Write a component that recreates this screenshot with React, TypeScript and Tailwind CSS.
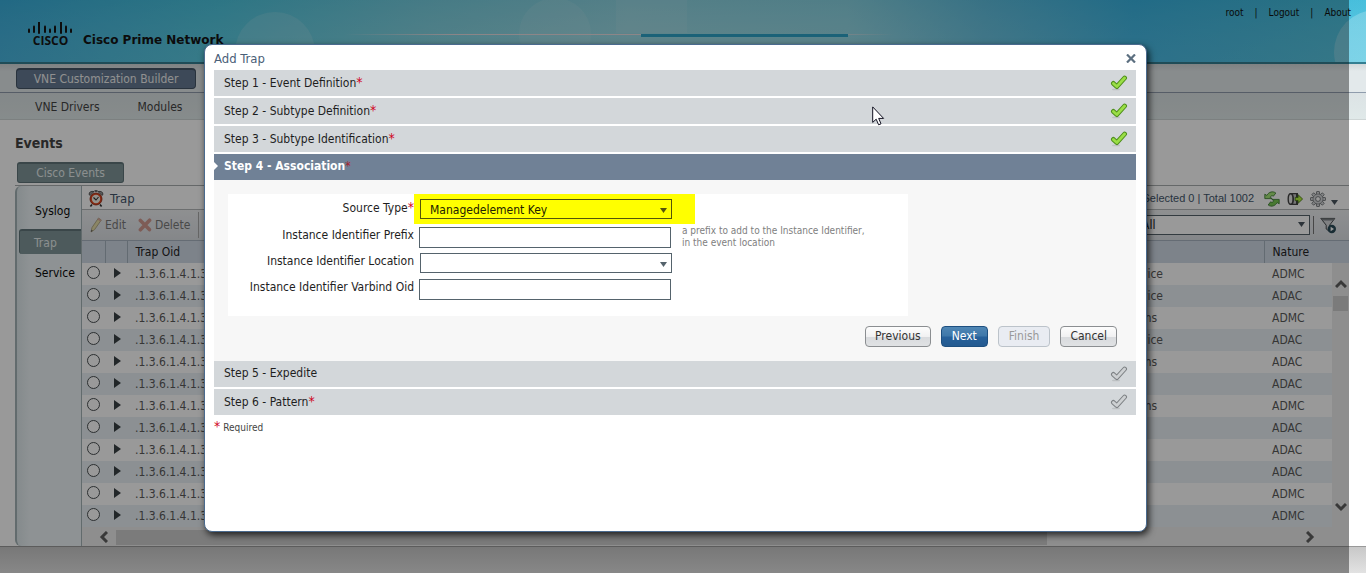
import React from "react";

const SERVICE = "vice";
const ALARMS = "ms";

const rows: { detail: string; nature: string }[] = [
  { detail: SERVICE, nature: "ADMC" },
  { detail: SERVICE, nature: "ADAC" },
  { detail: ALARMS, nature: "ADMC" },
  { detail: SERVICE, nature: "ADAC" },
  { detail: ALARMS, nature: "ADAC" },
  { detail: "", nature: "ADAC" },
  { detail: ALARMS, nature: "ADMC" },
  { detail: "", nature: "ADAC" },
  { detail: "", nature: "ADAC" },
  { detail: "", nature: "ADAC" },
  { detail: "", nature: "ADMC" },
  { detail: "", nature: "ADMC" },
];

const logoBars: [number, number, number][] = [
  [0, 7, 10], [5, 4, 10], [10, 0, 11], [16, 4, 10], [21, 7, 10],
  [26, 4, 10], [32, 0, 11], [37, 4, 10], [42, 7, 10],
];

function Logo() {
  return (
    <div className="flex w-[45px] flex-col items-center text-[#171717]">
      <svg width="45" height="12" viewBox="0 0 45 12" aria-hidden="true">
        {logoBars.map(([x, top, bottom]) => (
          <line key={x} x1={x + 1} x2={x + 1} y1={top + 0.5} y2={bottom} stroke="#171717" strokeWidth="2" strokeLinecap="round" />
        ))}
      </svg>
      <span className="font-['Open_Sans',sans-serif] text-[12px] leading-[14px] font-bold">CISCO</span>
    </div>
  );
}

function CheckIcon({ done }: { done: boolean }) {
  const edge = done ? "#4f8f1c" : "#7d8184";
  const fill = done ? "#9ade46" : "#cdd0d2";
  return (
    <svg width="18" height="16" viewBox="0 0 18 16" aria-hidden="true">
      <ellipse cx="6" cy="14.4" rx="4" ry=".9" fill="#000" opacity="0.1" />
      <path d="M3.4 8.4L6.8 11.6L14.6 3" fill="none" stroke={edge} strokeWidth="4.8" strokeLinecap="round" strokeLinejoin="round" />
      <path d="M3.4 8.4L6.8 11.6L14.6 3" fill="none" stroke={fill} strokeWidth="2.8" strokeLinecap="round" strokeLinejoin="round" />
    </svg>
  );
}

function Star() {
  return <span className="text-[14px] text-[#d0021b]">*</span>;
}

function StepBar({ title, required, done }: { title: string; required?: boolean; done: boolean }) {
  return (
    <button type="button" className="flex h-[26px] w-full items-center justify-between bg-[#d3d7da] pr-2 pl-[10px] text-left text-[#1e1e1e]">
      <span className="pb-0.5">
        {title}
        {required && <Star />}
      </span>
      <CheckIcon done={done} />
    </button>
  );
}

function Caret({ color }: { color: string }) {
  return (
    <svg width="7" height="5" viewBox="0 0 7 5" aria-hidden="true">
      <path d="M0 0H7L3.5 5Z" fill={color} />
    </svg>
  );
}

function SelectBox({ id, value, caret, border }: { id: string; value: string; caret: string; border: string }) {
  return (
    <div className="relative ml-px w-[252px]">
      <select id={id} defaultValue={value} className={"block h-5 w-full appearance-none border bg-transparent pt-0.5 pl-[9px] text-[12px] leading-4 text-[#222200] " + border}>
        <option value={value}>{value}</option>
      </select>
      <span className="pointer-events-none absolute top-[9px] right-[5px]">
        <Caret color={caret} />
      </span>
    </div>
  );
}

function AlarmIcon() {
  return (
    <svg width="16" height="17" viewBox="0 0 16 17" aria-hidden="true">
      <path d="M4 14.5L2.4 16.5M12 14.5L13.6 16.5" stroke="#333" strokeWidth="1.6" />
      <path d="M1 4.6C1 2 3 .8 6 1.6L2.2 5.4ZM15 4.6C15 2 13 .8 10 1.6L13.8 5.4Z" fill="#999" stroke="#333" strokeWidth=".7" />
      <path d="M6.5 1h3" stroke="#333" strokeWidth="1.4" />
      <circle cx="8" cy="9" r="6" fill="#e0441c" stroke="#8d260c" strokeWidth=".8" />
      <circle cx="8" cy="9" r="4.2" fill="#f7f3e8" />
      <path d="M5.5 7.5L8 10L10.5 7" fill="none" stroke="#333" strokeWidth="1.1" />
    </svg>
  );
}

function PencilIcon() {
  return (
    <svg width="12" height="16" viewBox="0 0 12 16" aria-hidden="true">
      <path d="M1 15L2 10.5L8.5 1L11.3 3L4.6 12.6Z" fill="#e8dfa8" stroke="#a59b77" strokeWidth=".8" />
      <path d="M8.5 1L11.3 3L10.3 4.5L7.5 2.5Z" fill="#dba9a0" />
      <path d="M1 15L1.5 12.8L2.8 13.8Z" fill="#555" />
    </svg>
  );
}

function DeleteIcon() {
  return (
    <svg width="14" height="14" viewBox="0 0 14 14" aria-hidden="true">
      <path d="M2.4 2.4L11.4 11.6M11.6 2.2L2.4 11.8" stroke="#d29a90" strokeWidth="3.6" strokeLinecap="round" />
    </svg>
  );
}

function RefreshIcon() {
  return (
    <svg width="16" height="16" viewBox="0 0 16 16" aria-hidden="true">
      <path d="M.8 7.6V3.2L2.8 4.4C5 .8 8.8 -.2 11.8 2L9.4 5.2C8 4.2 6.8 4.8 6.2 6.4L8.2 7.6Z" fill="#a5e678" stroke="#35752a" strokeWidth=".8" strokeLinejoin="round" />
      <path d="M15.2 8.4V12.8L13.2 11.6C11 15.2 7.2 16.2 4.2 14L6.6 10.8C8 11.8 9.2 11.2 9.8 9.6L7.8 8.4Z" fill="#78ca54" stroke="#35752a" strokeWidth=".8" strokeLinejoin="round" />
    </svg>
  );
}

function ExportIcon() {
  return (
    <svg width="16" height="14" viewBox="0 0 16 14" aria-hidden="true">
      <path d="M3.5 1H11V13H3.5C1.6 13 .5 10.5 .5 7S1.6 1 3.5 1Z" fill="#444" />
      <ellipse cx="3.6" cy="7" rx="1.7" ry="4.6" fill="#e8e8e8" />
      <path d="M6 2.2H9V11.8H6.2C7.4 9 7.4 5 6 2.2Z" fill="#c4c4c4" />
      <path d="M8.2 5.4H11.2V2.8L15.6 7L11.2 11.2V8.6H8.2Z" fill="#b4f03c" stroke="#3e6f12" strokeWidth=".8" />
    </svg>
  );
}

function GearIcon() {
  return (
    <svg width="16" height="16" viewBox="0 0 16 16" aria-hidden="true">
      {[0, 45, 90, 135, 180, 225, 270, 315].map((angle) => (
        <rect key={angle} x="6.5" y=".5" width="3" height="4" rx=".5" fill="#d6d8da" stroke="#6c7074" strokeWidth=".8" transform={`rotate(${angle} 8 8)`} />
      ))}
      <circle cx="8" cy="8" r="5" fill="#d6d8da" stroke="#6c7074" strokeWidth=".6" />
      <circle cx="8" cy="8" r="2.4" fill="#fff" stroke="#6c7074" strokeWidth=".9" />
    </svg>
  );
}

function FunnelIcon() {
  return (
    <svg width="17" height="17" viewBox="0 0 17 17" aria-hidden="true">
      <path d="M.8 1.4H14.8L9.6 8.2V14.6L6.2 12V8.2Z" fill="#d5d8da" stroke="#44484b" strokeWidth="1" />
      <path d="M.8 1.4H14.8L13.6 3.4H2.2Z" fill="#7a7f83" />
      <circle cx="11.8" cy="12" r="4.2" fill="#2b4b58" />
      <path d="M10.6 9.8V14.2L14 12Z" fill="#fff" />
    </svg>
  );
}

function Chevron({ d, width, height }: { d: string; width: number; height: number }) {
  return (
    <svg width={width} height={height} viewBox={`0 0 ${width} ${height}`} aria-hidden="true">
      <path d={d} fill="none" stroke="#606060" strokeWidth="3" />
    </svg>
  );
}

function Banner() {
  return (
    <header className="relative flex h-[64px] items-start justify-between overflow-hidden border-b-2 border-[#347f92] bg-[linear-gradient(90deg,#3eb2df_0%,#53cae1_16%,#80d4e2_31%,#9bdce6_46%,#94dae6_62%,#67c3e1_72%,#3eb7e4_83%,#4fc4df_100%)]">
      <svg className="absolute inset-0" width="100%" height="62" aria-hidden="true">
        <defs>
          <linearGradient id="shade" x1="0" y1="0" x2="0" y2="1">
            <stop offset="0" stopColor="#0b8fbe" stopOpacity=".1" />
            <stop offset="1" stopColor="#fff" stopOpacity=".06" />
          </linearGradient>
          <linearGradient id="line" x1="0" y1="0" x2="1" y2="0">
            <stop offset="0" stopColor="#f2dfe2" stopOpacity="0" />
            <stop offset=".2" stopColor="#f2dfe2" stopOpacity=".9" />
            <stop offset=".85" stopColor="#f2dfe2" stopOpacity=".9" />
            <stop offset="1" stopColor="#f2dfe2" stopOpacity="0" />
          </linearGradient>
        </defs>
        <rect width="100%" height="62" fill="url(#shade)" />
        <circle cx="275" cy="52" r="40" fill="#fff" opacity=".13" />
        <circle cx="555" cy="34" r="36" fill="#fff" opacity=".09" />
        <rect x="616" y="0" width="71" height="33" fill="#fff" opacity=".08" />
        <circle cx="1376" cy="52" r="42" fill="#fff" opacity=".22" />
        <rect x="344" y="34" width="550" height="1" fill="url(#line)" />
        <rect x="641" y="34" width="207" height="3" fill="#2ea3c8" />
      </svg>
      <div className="relative flex items-end gap-[10px] pt-[22px] pl-[28px]">
        <Logo />
        <h1 className="font-['DejaVu_Sans',sans-serif] text-[12px] leading-[16px] font-bold whitespace-nowrap text-[#151515]">Cisco Prime Network</h1>
      </div>
      <nav className="relative flex items-center gap-[11px] pt-[6px] pr-[15px] text-[10px] leading-[14px] text-[#111]">
        <a href="#root">root</a>
        <span>|</span>
        <a href="#logout">Logout</a>
        <span>|</span>
        <a href="#about">About</a>
      </nav>
    </header>
  );
}

function EventsTable() {
  return (
    <table className="w-full table-fixed border-collapse text-[12px] leading-4">
      <colgroup>
        <col className="w-[23px]" />
        <col className="w-[22px]" />
        <col />
        <col className="w-[129px]" />
        <col className="w-[85px]" />
      </colgroup>
      <thead>
        <tr className="h-[22px] bg-[#d0dbe7] text-left text-[#222]">
          <th className="border-r border-[#a5b2bf]" aria-label="Select" />
          <th className="border-r border-[#a5b2bf]" aria-label="Expand" />
          <th className="px-2 font-normal">Trap Oid</th>
          <th className="border-r border-[#a5b2bf]" aria-label="Details" />
          <th className="px-2 font-normal">Nature</th>
        </tr>
      </thead>
      <tbody>
        {rows.map((row, index) => (
          <tr key={index} className="h-[22px] text-[#5a5a5a] odd:bg-white even:bg-[#e9f1f5]">
            <td className="p-0 pb-[3px]">
              <input type="radio" name="trap" aria-label={`Select row ${index + 1}`} className="mx-auto block size-[13px] appearance-none rounded-full border border-[#4a4f52] bg-white" />
            </td>
            <td className="p-0 pb-[3px] pl-0.5">
              <svg className="mx-auto" width="7" height="10" viewBox="0 0 7 10" aria-hidden="true">
                <path d="M0 0L7 5L0 10Z" fill="#3a4145" />
              </svg>
            </td>
            <td className="px-2 py-0">.1.3.6.1.4.1.3</td>
            <td className="py-0 pl-[6px]">{row.detail}</td>
            <td className="px-2 py-0">{row.nature}</td>
          </tr>
        ))}
      </tbody>
    </table>
  );
}

function EventsPanel() {
  return (
    <section className="flex min-w-0 flex-1 flex-col">
      <div className="flex h-[24px] items-center justify-between border-b border-[#b4b8ba] pt-0.5 pl-[6px] text-[13px]">
        <h3 className="flex items-center gap-[6px] text-[#44566b]">
          <AlarmIcon />
          Trap
        </h3>
        <div className="flex items-center gap-[7px] pr-[11px]">
          <span className="mr-[3px] font-['Liberation_Sans',sans-serif] text-[11px] text-[#44566b]">Selected 0 | Total 1002</span>
          <RefreshIcon />
          <ExportIcon />
          <GearIcon />
          <span className="-ml-0.5 pt-2">
            <Caret color="#4a5660" />
          </span>
        </div>
      </div>
      <div className="flex h-[31px] items-center justify-between border-b border-[#a9b5c1] bg-[linear-gradient(#eef0f2,#dde1e5)] pl-2 text-[12px] text-[#7a7a7a]">
        <div className="flex items-center gap-3">
          <button type="button" className="flex items-center gap-[3px]">
            <PencilIcon />
            Edit
          </button>
          <button type="button" className="flex items-center gap-[3px]">
            <DeleteIcon />
            Delete
          </button>
          <span className="-ml-1 h-[26px] w-px bg-[#aaa]" />
        </div>
        <div className="flex items-center gap-[3px] pr-[12px]">
          <div className="relative w-[175px]">
            <select aria-label="Show" className="block h-[20px] w-full appearance-none border border-[#55636c] bg-white pl-[6px] text-[12px] text-[#222]">
              <option>All</option>
            </select>
            <span className="pointer-events-none absolute top-[7px] right-[5px]">
              <Caret color="#4a5660" />
            </span>
          </div>
          <span className="mr-[3px] h-[18px] w-px bg-[#777]" />
          <button type="button" aria-label="Filter">
            <FunnelIcon />
          </button>
        </div>
      </div>
      <div className="relative">
        <EventsTable />
        <div className="absolute top-[22px] right-0 bottom-0 flex w-[17px] flex-col items-center justify-between bg-[#ededed] pt-[16px] pb-[15px]">
          <div className="flex w-full flex-col items-center gap-2">
            <Chevron d="M1 8L6 3L11 8" width={12} height={9} />
            <span className="h-[15px] w-[15px] bg-[#cdcdcd]" />
          </div>
          <Chevron d="M1 1L6 6L11 1" width={12} height={9} />
        </div>
      </div>
      <div className="flex h-[19px] items-center bg-[#ededed] pt-px">
        <span className="flex w-[34px] justify-center pl-2">
          <Chevron d="M8 1L3 6L8 11" width={9} height={12} />
        </span>
        <span className="h-[15px] w-[931px] bg-[#cdcdcd]" />
        <span className="flex-1" />
        <span className="pr-[34px]">
          <Chevron d="M1 1L6 6L1 11" width={9} height={12} />
        </span>
      </div>
    </section>
  );
}

function Page() {
  return (
    <div className="flex min-h-screen flex-col bg-white">
      <Banner />
      <nav className="flex h-[29px] items-center border-b border-[#8f9cac] bg-[linear-gradient(#d2d8da,#e3e9eb_25%,#e3e9eb)] pt-px pl-4">
        <a href="#builder" className="flex h-[21px] w-[180px] items-center justify-center rounded-[4px] border border-t-2 border-[#455566] bg-[#667b93] text-[12px] whitespace-nowrap text-[#f0f0f0]">VNE Customization Builder</a>
      </nav>
      <nav className="flex h-[27px] items-center gap-[38px] border-b border-[#cfd6d6] bg-[linear-gradient(#dce3e5,#e0e9e9)] pt-px pl-[35px] text-[12px] text-[#444]">
        <a href="#drivers">VNE Drivers</a>
        <a href="#modules">Modules</a>
      </nav>
      <main className="flex flex-col pr-[17px]">
        <h2 className="pt-[13px] pl-[15px] text-[14px] leading-5 font-bold text-[#444]">Events</h2>
        <div className="mt-[9px] ml-[15px] border-b border-[#a9adaf] pb-0.5 pl-0.5">
          <a href="#cisco" className="flex h-[21px] w-[107px] items-center justify-center rounded-[3px] border border-t-2 border-[#61767a] bg-[#80979a] text-[12px] text-[#e8eeee]">Cisco Events</a>
        </div>
        <div className="flex pl-[15px]">
          <nav className="flex w-[67px] flex-col gap-1.5 rounded-l-[6px] border-r border-l-2 border-[#a3b3b6] bg-[linear-gradient(90deg,#dde7ea,#edf4f7_20%,#edf4f7)] pt-3 pl-0.5 text-[12px] text-[#0a0a0a]">
            <a href="#syslog" className="flex h-[25px] items-center pl-4">Syslog</a>
            <a href="#trap" className="flex h-[25px] items-center rounded-l-[3px] border-t-2 border-l border-[#61767a] bg-[#80979a] pl-[14px] text-[#e8eeee]">Trap</a>
            <a href="#service" className="flex h-[25px] items-center pl-4">Service</a>
          </nav>
          <EventsPanel />
        </div>
      </main>
      <footer className="min-h-[27px] flex-1 border-t border-[#999] bg-[linear-gradient(#c8c8c8,#e2e2e2)]" />
    </div>
  );
}

function FieldRow({ id, label, required, highlight, children }: { id: string; label: string; required?: boolean; highlight?: boolean; children: React.ReactNode }) {
  return (
    <div className={highlight ? "flex h-[30px]" : "flex h-[26px]"}>
      <label htmlFor={id} className="w-[186px] self-center pb-1 text-right whitespace-nowrap text-[#1e1e1e]">
        {label}
        {required && <Star />}
      </label>
      <div className={highlight ? "flex w-[281px] items-center bg-[#ffff00] pl-[5px]" : "flex items-center gap-[11px] pl-[5px]"}>{children}</div>
    </div>
  );
}

const inputClass = "h-[21px] w-[252px] border border-[#55636c] bg-white px-2 text-[12px]";
const plainButton = "h-[21px] rounded-[4px] border border-[#8b8e91] bg-[linear-gradient(#fdfdfd_0%,#f1f1f2_50%,#d9dbde_55%,#e0e2e4_100%)] px-[9px] pb-0.5 leading-4 text-[#333]";

function AddTrapDialog() {
  return (
    <div role="dialog" aria-label="Add Trap" className="mt-11 w-[943px] self-start rounded-[8px] border border-[#4a6a8e] bg-white pr-[10px] pb-[95px] pl-[9px] text-[12px] leading-4 shadow-[2px_3px_7px_rgba(0,0,0,0.75)]">
      <div className="flex h-[25px] items-center justify-between pt-0.5 text-[#4a6078]">
        <h2 className="text-[13px]">Add Trap</h2>
        <button type="button" aria-label="Close">
          <svg width="10" height="9" viewBox="0 0 10 9" aria-hidden="true">
            <path d="M1 .5L9 8.5M9 .5L1 8.5" stroke="#5c6f80" strokeWidth="2.2" />
          </svg>
        </button>
      </div>
      <div className="flex flex-col gap-0.5">
        <StepBar title="Step 1 - Event Definition" required done />
        <StepBar title="Step 2 - Subtype Definition" required done />
        <StepBar title="Step 3 - Subtype Identification" required done />
        <div>
          <button type="button" className="flex h-[26px] w-full items-center gap-[6px] bg-[#708196] pb-0.5 text-left font-bold text-white">
            <svg width="4" height="8" viewBox="0 0 4 8" aria-hidden="true">
              <path d="M0 0L4 4L0 8Z" fill="#fff" />
            </svg>
            <span>
              Step 4 - Association<span className="font-normal text-[#a8202c]">*</span>
            </span>
          </button>
          <form className="bg-[#f7f7f7] px-[14px] pt-[14px] pb-[14px]" onSubmit={(event) => event.preventDefault()}>
            <div className="w-[680px] max-w-full bg-white pb-[14px]">
              <FieldRow id="source" label="Source Type" required highlight>
                <SelectBox id="source" value="Managedelement Key" caret="#55550a" border="border-[#55550a]" />
              </FieldRow>
              <FieldRow id="prefix" label="Instance Identifier Prefix">
                <input id="prefix" className={inputClass} />
                <span className="text-[10px] leading-3 text-[#808080]">
                  a prefix to add to the Instance Identifier,
                  <br />
                  in the event location
                </span>
              </FieldRow>
              <FieldRow id="location" label="Instance Identifier Location">
                <SelectBox id="location" value="" caret="#55636c" border="border-[#55636c]" />
              </FieldRow>
              <FieldRow id="varbind" label="Instance Identifier Varbind Oid">
                <input id="varbind" className={inputClass} />
              </FieldRow>
            </div>
            <div className="flex justify-end gap-[10px] pt-[10px] pr-[5px]">
              <button type="button" className={plainButton}>Previous</button>
              <button type="button" className="h-[21px] rounded-[4px] border border-[#1d4f80] bg-[linear-gradient(#4f86b4_0%,#3f78aa_45%,#26609a_55%,#245a90_100%)] px-[10px] pb-0.5 leading-4 text-white">Next</button>
              <button type="button" disabled className="h-[21px] rounded-[4px] border border-[#bcc3ca] bg-[#e9ecf2] px-[10px] pb-0.5 leading-4 text-[#999]">Finish</button>
              <button type="button" className={plainButton}>Cancel</button>
            </div>
          </form>
          <StepBar title="Step 5 - Expedite" done={false} />
        </div>
        <StepBar title="Step 6 - Pattern" required done={false} />
      </div>
      <p className="pt-[3px] text-[10px] text-[#444]">
        <Star /> Required
      </p>
    </div>
  );
}

export default function App() {
  return (
    <div className="relative overflow-hidden font-['DejaVu_Sans_Condensed','DejaVu_Sans',sans-serif]">
      <Page />
      <div className="absolute inset-y-0 right-[17px] left-0 flex justify-center bg-black/40 pl-0.5">
        <AddTrapDialog />
      </div>
      <svg className="absolute top-[106px] left-[872px]" width="13" height="20" viewBox="0 0 13 20" aria-hidden="true">
        <path d="M.7 .9V16.4L4.2 13.2L6.6 18.8L9 17.8L6.7 12.4H11.6Z" fill="#fff" stroke="#101020" strokeWidth="1" />
      </svg>
    </div>
  );
}
